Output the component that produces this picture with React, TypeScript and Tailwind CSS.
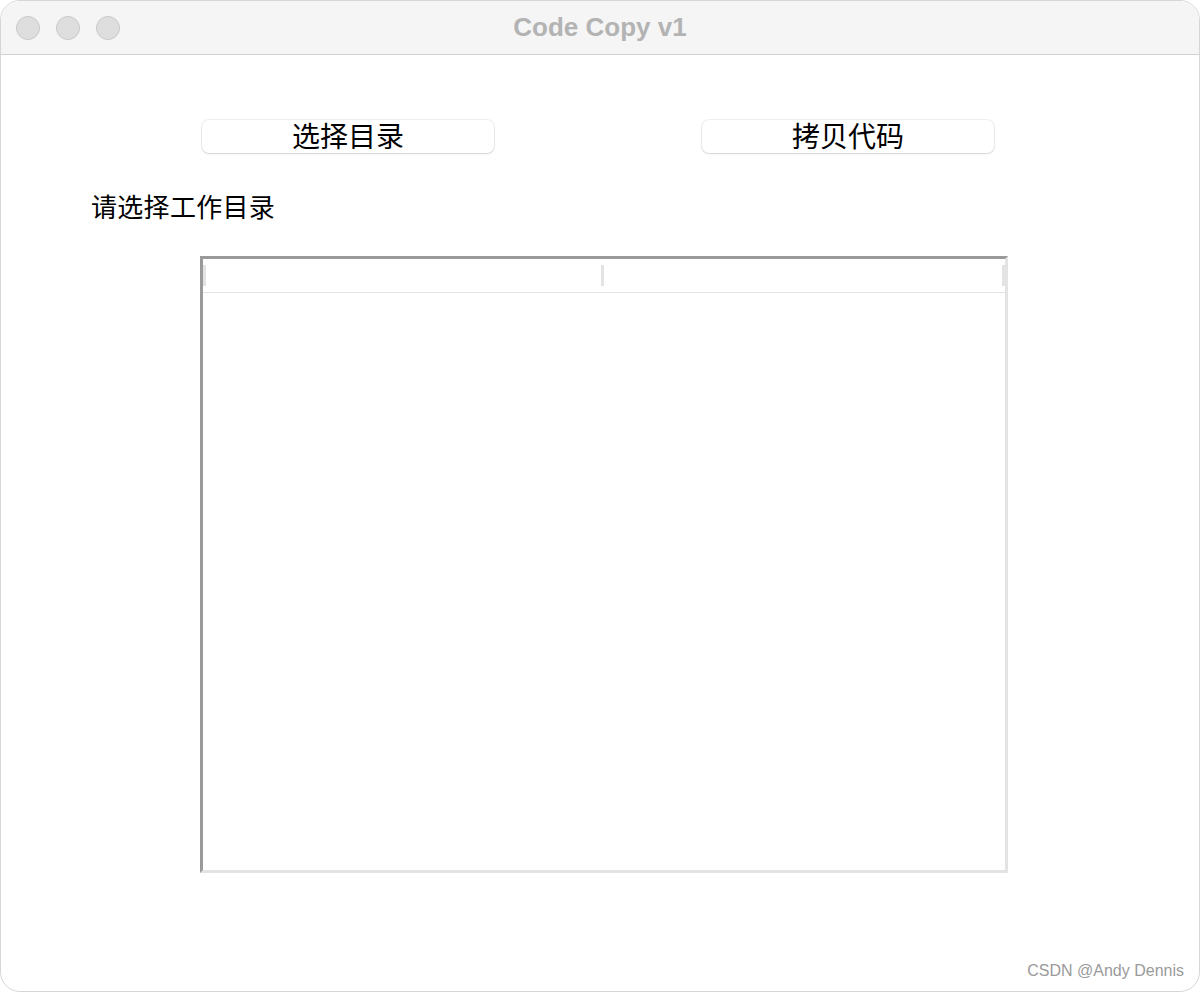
import React from "react";

const cjk = "font-['Noto_Sans_CJK_SC','Noto_Sans',sans-serif]";

function TrafficLight() {
  return <span className="h-[24px] w-[24px] rounded-full border border-[#c8c8c8] bg-[#dedede]" />;
}

function MacButton({ label }: { label: string }) {
  return (
    <button
      type="button"
      className={`flex h-[33px] w-[292px] items-center justify-center rounded-[7px] bg-white pb-[3px] text-[28px] leading-none text-black shadow-[0_0_0_1px_rgba(0,0,0,0.06),0_1px_2px_rgba(0,0,0,0.12)] ${cjk}`}
    >
      {label}
    </button>
  );
}

export default function App() {
  return (
    <div className="h-[992px] w-[1200px] bg-white">
      <div className="flex h-full w-full flex-col overflow-hidden rounded-[20px] border border-[#d6d6d6] bg-white">
        {/* title bar */}
        <div className="relative flex h-[54px] shrink-0 items-center border-b border-[#d2d2d2] bg-[#f5f5f5]">
          <div className="flex items-center gap-[16px] pl-[15px]">
            <TrafficLight />
            <TrafficLight />
            <TrafficLight />
          </div>
          <div className="absolute inset-0 flex items-center justify-center">
            <span className="font-['Liberation_Sans',Arial,sans-serif] text-[26px] font-bold text-[#b3b3b3]">
              Code Copy v1
            </span>
          </div>
        </div>

        {/* body */}
        <div className="relative flex flex-1 flex-col">
          <div className="flex pt-[65px]">
            <div className="ml-[201px]">
              <MacButton label="选择目录" />
            </div>
            <div className="ml-[208px]">
              <MacButton label="拷贝代码" />
            </div>
          </div>

          <div className={`ml-[90px] mt-[35px] text-[26px] leading-[36px] tracking-[0.3px] text-black ${cjk}`}>请选择工作目录</div>

          <div className="ml-[199px] mt-[32px] h-[617px] w-[808px] border-[3px] border-b-[#e3e3e3] border-l-[#9a9a9a] border-r-[#e3e3e3] border-t-[#9a9a9a] bg-white">
            <div className="flex h-[34px] items-center border-b border-[#e3e3e3]">
              <div className="flex h-full flex-1 items-center">
                <span className="h-[21px] w-[3px] bg-[#e3e3e3]" />
                <div className="flex-1" />
                <span className="h-[21px] w-[3px] bg-[#e3e3e3]" />
              </div>
              <div className="flex h-full flex-1 items-center justify-end">
                <span className="h-[21px] w-[3px] bg-[#e3e3e3]" />
              </div>
            </div>
          </div>

          <div className="absolute bottom-[8px] right-[15px] font-['Liberation_Sans',Arial,sans-serif] text-[16px] text-[#9a9a9a]">
            CSDN @Andy Dennis
          </div>
        </div>
      </div>
    </div>
  );
}
